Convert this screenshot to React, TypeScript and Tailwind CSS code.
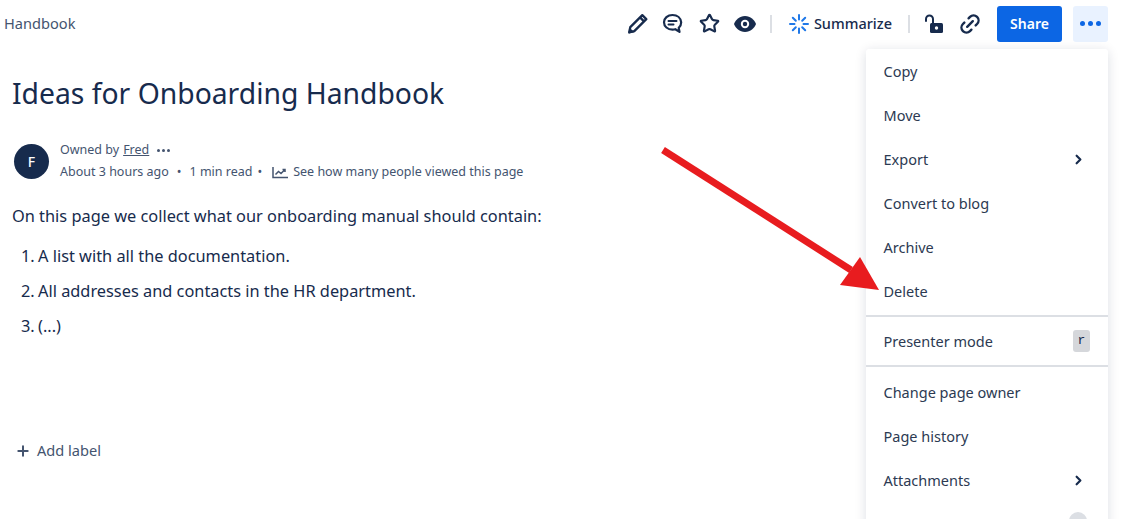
import { Link2, Star, ChevronRight, Plus } from "lucide-react"

const font = { fontFamily: '"Noto Sans", sans-serif' }

function MenuItem({ label, arrow, hint }: { label: string; arrow?: boolean; hint?: string }) {
  return (
    <div className="flex h-11 items-center justify-between pl-[17.5px] pr-[18px] text-[14.5px] text-[#2c3a52]">
      <span className="pt-[2px]">{label}</span>
      {arrow && <ChevronRight size={15} strokeWidth={3.5} className="mr-[4px] text-[#172b4d]" />}
      {hint && (
        <span className="flex h-[22px] w-[17px] items-center justify-center rounded-[3px] bg-[#d5d7db] font-['Liberation_Mono'] text-[13px] text-[#172b4d]">
          {hint}
        </span>
      )}
    </div>
  )
}

function ToolbarIcons() {
  return (
    <div className="flex items-center text-[#172b4d]">
      <svg width="20" height="20" viewBox="1.500 1.500 17.500 17.500" fill="none">
        <path d="M14 2.500l3.500 3.500L7 16.500 2.500 17.500 3.500 13z" stroke="#172b4d" strokeWidth="2" strokeLinejoin="round" />
        <path d="M2 18.500l1-5 4 4z" fill="#172b4d" />
        <path d="M12 4.500l3.500 3.500" stroke="#172b4d" strokeWidth="2" />
      </svg>
      <svg width="21" height="21" viewBox="0 0 21 21" fill="none" className="ml-[14px]">
        <path d="M10.500 2C5.600 2 2 5.200 2 9.300s3.600 7.300 8.500 7.300c1 0 2-.1 2.800-.4l4.200 2.600-.8-3.900c1.600-1.400 2.500-3.400 2.500-5.600C18.700 5.200 15.400 2 10.500 2z" stroke="#172b4d" strokeWidth="2.200" strokeLinejoin="round" />
        <path d="M6.500 8h8M6.500 11.500h5" stroke="#172b4d" strokeWidth="2" strokeLinecap="round" />
      </svg>
      <Star size={21} strokeWidth={2.5} className="ml-[16px]" />
      <svg width="22" height="16" viewBox="0 0 22 16" className="ml-[14px]">
        <path d="M11 0C5.500 0 1.500 4 0 8c1.500 4 5.500 8 11 8s9.500-4 11-8c-1.500-4-5.500-8-11-8z" fill="#172b4d" />
        <circle cx="11" cy="8" r="4.200" fill="#fff" />
        <circle cx="11" cy="8" r="2.200" fill="#172b4d" />
      </svg>
    </div>
  )
}

function SummarizeIcon() {
  return (
    <svg width="20" height="20" viewBox="0 0 20 20" stroke="#1f78e8" strokeWidth="2" strokeLinecap="round">
      <path d="M10 1v4.500M10 14.500V19M1 10h4.500M14.500 10H19M3.800 3.800l3 3M13.200 13.200l3 3M16.200 3.800l-3 3M6.800 13.200l-3 3" />
    </svg>
  )
}

function UnlockIcon() {
  return (
    <svg width="20" height="20" viewBox="0 0 20 20">
      <path d="M2 7V5a3.500 3.500 0 0 1 7 0v4" fill="none" stroke="#172b4d" strokeWidth="2" strokeLinecap="round" />
      <rect x="6" y="9" width="13" height="10" rx="1.500" fill="#172b4d" />
      <circle cx="12.500" cy="14" r="1.700" fill="#fff" />
    </svg>
  )
}

export default function App() {
  return (
    <div className="relative h-[519px] w-[1123px] overflow-hidden bg-white text-[#172b4d]" style={font}>
      <header className="flex h-[47px] items-center pl-1 pr-[15px]">
        <span className="text-[14.6px] text-[#44546f]">Handbook</span>
        <div className="ml-auto flex items-center">
          <ToolbarIcons />
          <div className="ml-[14px] mr-[17px] h-[18px] w-0.5 bg-[#dcdfe4]" />
          <SummarizeIcon />
          <span className="ml-[5px] text-[14.500px] font-medium text-[#172b4d]">Summarize</span>
          <div className="ml-[16px] mr-[14px] h-[18px] w-0.5 bg-[#dcdfe4]" />
          <UnlockIcon />
          <Link2 size={24} strokeWidth={2.4} className="ml-[14px] -rotate-45" />
          <button className="ml-[15px] h-9 w-[65px] rounded-[3px] bg-[#0c66e4] text-[14px] font-semibold text-white">Share</button>
          <button className="ml-[11px] flex h-9 w-[35px] items-center justify-center gap-[3px] rounded-[3px] bg-[#e9f2ff]">
            <span className="h-[5px] w-[5px] rounded-full bg-[#0c66e4]" />
            <span className="h-[5px] w-[5px] rounded-full bg-[#0c66e4]" />
            <span className="h-[5px] w-[5px] rounded-full bg-[#0c66e4]" />
          </button>
        </div>
      </header>

      <main className="pl-3">
        <h1 className="mt-[26px] text-[28.300px] leading-10 text-[#172b4d]">Ideas for Onboarding Handbook</h1>

        <div className="mt-[27px] flex items-center">
          <div className="ml-0.5 flex h-[35px] w-[35px] items-center justify-center rounded-full bg-[#172b4d] text-[14px] font-medium text-white">F</div>
          <div className="ml-[11px] text-[12.500px] text-[#44546f]">
            <div className="flex h-[21px] items-center">
              Owned by <span className="ml-1 underline">Fred</span>
              <span className="ml-2 flex gap-[2px]">
                <span className="h-[3px] w-[3px] rounded-full bg-[#44546f]" />
                <span className="h-[3px] w-[3px] rounded-full bg-[#44546f]" />
                <span className="h-[3px] w-[3px] rounded-full bg-[#44546f]" />
              </span>
            </div>
            <div className="flex h-[21px] items-center pt-[2px]">
              <span>About 3 hours ago</span>
              <span className="mx-[8px]">•</span>
              <span>1 min read</span>
              <span className="mx-[5px]">•</span>
              <svg width="16" height="12" viewBox="0 0 16 12" fill="none" stroke="#44546f" strokeWidth="1.500" className="ml-[5px] mr-[5px]">
                <path d="M1 0v10.500h15M3.500 7.500l3-3 2.500 2 4-4M10.500 2.500h2.500V5" />
              </svg>
              <span>See how many people viewed this page</span>
            </div>
          </div>
        </div>

        <p className="mt-[22px] text-[16.350px] leading-6 text-[#172b4d]">On this page we collect what our onboarding manual should contain:</p>
        <ol className="mt-4 text-[16.350px] leading-6 text-[#172b4d]">
          <li className="flex h-[35px] pl-[9px]"><span className="w-[17px]">1.</span><span>A list with all the documentation.</span></li>
          <li className="flex h-[35px] pl-[9px]"><span className="w-[17px]">2.</span><span>All addresses and contacts in the HR department.</span></li>
          <li className="flex h-6 pl-[9px]"><span className="w-[17px]">3.</span><span>(...)</span></li>
        </ol>

        <div className="mt-[102px] flex items-center gap-1 pl-[3px] text-[14.600px] text-[#44546f]">
          <Plus size={16} strokeWidth={3} />
          <span className="ml-0.5">Add label</span>
        </div>
      </main>

      {/* dropdown sits over the page */}
      <div className="absolute left-[866px] top-[49px] w-[242px] rounded-t-[3px] bg-white shadow-[0_2px_12px_rgba(9,30,66,0.14)]">
        <div className="pb-0.5">
          <MenuItem label="Copy" />
          <MenuItem label="Move" />
          <MenuItem label="Export" arrow />
          <MenuItem label="Convert to blog" />
          <MenuItem label="Archive" />
          <MenuItem label="Delete" />
        </div>
        <div className="h-0.5 bg-[#dcdfe4]" />
        <div className="py-[2px]">
          <MenuItem label="Presenter mode" hint="r" />
        </div>
        <div className="h-0.5 bg-[#dcdfe4]" />
        <div className="pt-[3px]">
          <MenuItem label="Change page owner" />
          <MenuItem label="Page history" />
          <MenuItem label="Attachments" arrow />
          <div className="flex h-11 justify-end pr-[21px] pt-[10px]">
            <span className="h-[18px] w-[18px] rounded-full bg-[#dcdfe4]" />
          </div>
        </div>
      </div>

      {/* annotation arrow */}
      <svg className="absolute left-0 top-0" width="1123" height="519" viewBox="0 0 1123 519" fill="none">
        <path d="M663 150 851 270" stroke="#e81c1f" strokeWidth="7" />
        <path d="M860 257 879 290 840 285z" fill="#e81c1f" />
      </svg>
    </div>
  )
}
